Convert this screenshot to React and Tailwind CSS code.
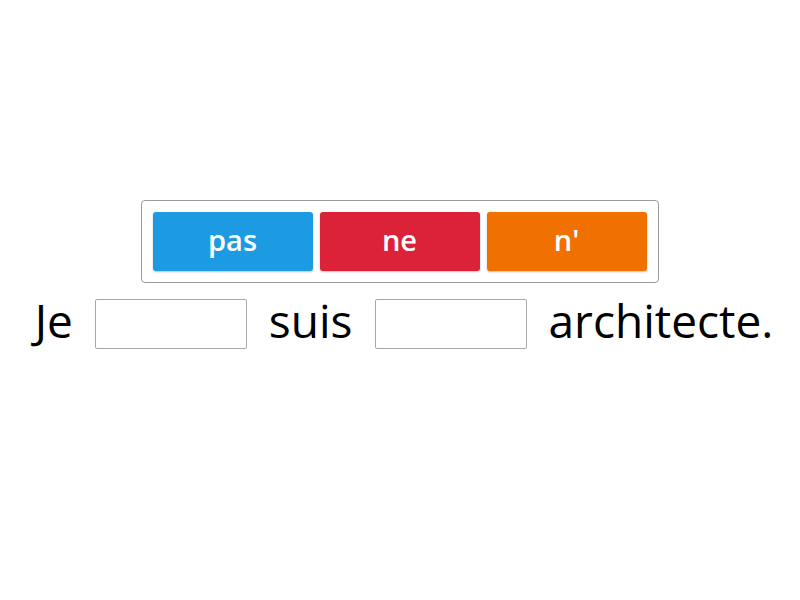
import React from 'react';

const tiles = [
    { label: 'pas', className: 'bg-[#1d9be2]' },
    { label: 'ne', className: 'bg-[#dc2239]' },
    { label: "n'", className: 'bg-[#f07000]' },
];

const Blank = () => (
    <div className="w-[152px] h-[50px] border border-[#a8a8a8] rounded-[2px] bg-white mx-[22px]"></div>
);

const App = () => {
    return (
        <div className="w-[800px] h-[600px] bg-white font-['Open_Sans',sans-serif] text-black">
            <div className="flex flex-col items-center pt-[200px]">
                <div className="flex gap-[7px] p-[11px] border border-[#9a9a9a] rounded-[4px] ml-[-1px]">
                    {tiles.map((t) => (
                        <div
                            key={t.label}
                            className={`w-[160px] h-[59px] rounded-[3px] flex items-center justify-center text-white text-[29px] font-semibold pb-[3px] shadow-[0_1px_2px_rgba(0,0,0,0.25)] ${t.className}`}
                        >
                            {t.label}
                        </div>
                    ))}
                </div>
                <div className="flex items-center mt-[16px] ml-[8px] text-[46px] leading-[50px]">
                    <span className="mt-[-8px]">Je</span>
                    <Blank />
                    <span className="mt-[-8px]">suis</span>
                    <Blank />
                    <span className="mt-[-8px]">architecte.</span>
                </div>
            </div>
        </div>
    );
};

export default App;
